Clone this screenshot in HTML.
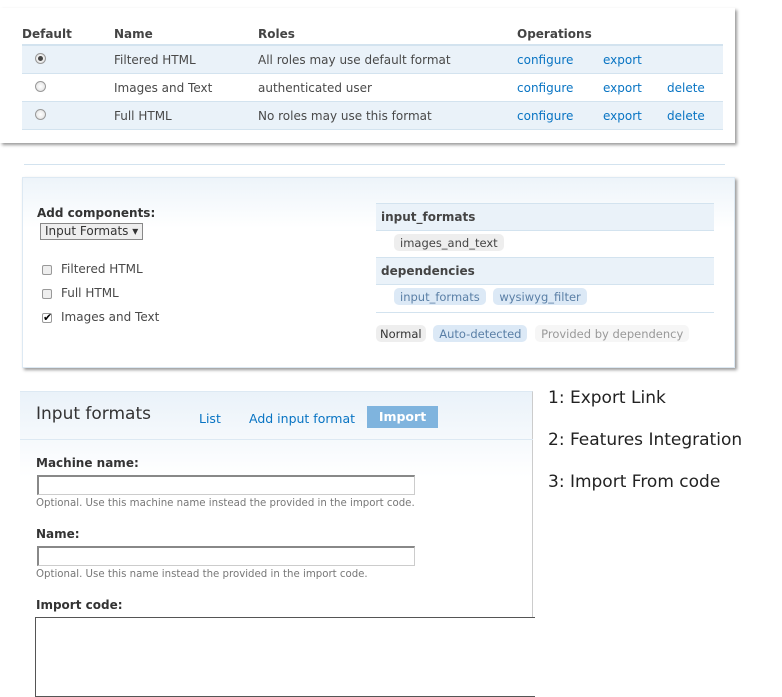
<!DOCTYPE html>
<html><head><style>
*{margin:0;padding:0;box-sizing:border-box}
body{width:782px;height:645px;background:#fff;font-family:"DejaVu Sans",Verdana,sans-serif;font-size:12px;color:#494949;position:relative;overflow:hidden}
.abs{position:absolute}
.p1{left:0;top:8px;width:735px;height:135px;box-shadow:2px 2px 3px #999;background:#fff}
table{position:absolute;left:22px;top:15px;width:701px;border-collapse:collapse}
th{text-align:left;font-weight:bold;height:22px;font-size:12px;padding:0;color:#444}
td{height:28px;padding:0;border-top:1px solid #d3e3ef;padding-top:2px}
tr.o td{background:#eaf2f9}
tr.last td{border-bottom:1px solid #d3e3ef}
thead tr th{border-bottom:2px solid #d3e3ef}
a{color:#0874c3;text-decoration:none}
.radio{display:inline-block;width:11px;height:11px;border-radius:50%;border:1px solid #999;background:radial-gradient(#fff,#ddd);margin-left:13px;vertical-align:middle;position:relative;top:-2px}
.radio.on::after{content:"";position:absolute;left:2px;top:2px;width:5px;height:5px;border-radius:50%;background:#444}
.p2{left:22px;top:177px;width:713px;height:191px;box-shadow:2px 2px 3px #999;border:1px solid #dde9f3;background:linear-gradient(#edf4fa,#fff 50px)}
.tag{display:inline-block;padding:2px 6px 1px;border-radius:5px;font-size:11.5px}
.hdr{position:absolute;left:353px;width:338px;height:28px;background:#eaf2f9;border-top:1px solid #d3e3ef;border-bottom:1px solid #d3e3ef;font-weight:bold;font-size:12px;color:#444;padding:6px 0 0 5px}
.cb{display:inline-block;width:10px;height:10px;border:1px solid #999;border-radius:2px;background:#eee;vertical-align:middle;margin-right:9px}
.p3{left:20px;top:391px;width:513px;height:260px;border-top:1px solid #dde9f3;border-right:1px solid #ccc;background:linear-gradient(#eaf2f9,#fff 85px)}
.lbl{position:absolute;left:16px;font-weight:bold;font-size:12px;color:#333}
.inp{position:absolute;left:17px;width:378px;height:20px;border:1px solid #ccc;border-top:2px solid #888;border-left:2px solid #888;background:#fff}
.desc{position:absolute;left:16px;font-size:10.2px;color:#777}
.note{position:absolute;left:548px;font-size:17px;color:#222}
</style></head><body>
<div class="abs p1">
<table>
<thead><tr><th style="width:92px">Default</th><th style="width:144px">Name</th><th style="width:259px">Roles</th><th style="width:86px">Operations</th><th style="width:64px"></th><th></th></tr></thead>
<tbody>
<tr class="o"><td><span class="radio on"></span></td><td>Filtered HTML</td><td>All roles may use default format</td><td><a>configure</a></td><td><a>export</a></td><td></td></tr>
<tr><td><span class="radio"></span></td><td>Images and Text</td><td>authenticated user</td><td><a>configure</a></td><td><a>export</a></td><td><a>delete</a></td></tr>
<tr class="o last"><td><span class="radio"></span></td><td>Full HTML</td><td>No roles may use this format</td><td><a>configure</a></td><td><a>export</a></td><td><a>delete</a></td></tr>
</tbody></table>
</div>
<div class="abs" style="left:24px;top:164px;width:701px;height:1px;background:#d3e3ef"></div>
<div class="abs p2">
<div class="abs" style="left:14px;top:28px;font-weight:bold;color:#333">Add components:</div>
<div class="abs" style="left:17px;top:45px;border:1px solid #888;background:#eee;padding:0 4px;height:17px;line-height:15px;color:#333">Input Formats ▾</div>
<div class="abs" style="left:19px;top:84px"><span class="cb"></span>Filtered HTML</div>
<div class="abs" style="left:19px;top:108px"><span class="cb"></span>Full HTML</div>
<div class="abs" style="left:19px;top:132px"><span class="cb" style="background:#fff;font-size:11px;line-height:8px;color:#000">✔</span>Images and Text</div>
<div class="hdr" style="top:25px">input_formats</div>
<div class="abs" style="left:371px;top:56px"><span class="tag" style="background:#eee;color:#444">images_and_text</span></div>
<div class="hdr" style="top:79px">dependencies</div>
<div class="abs" style="left:371px;top:110px"><span class="tag" style="background:#dce9f6;color:#5a7fa6">input_formats</span> &nbsp;<span class="tag" style="background:#dce9f6;color:#5a7fa6">wysiwyg_filter</span></div>
<div class="abs" style="left:353px;top:134px;width:338px;height:1px;background:#d3e3ef"></div>
<div class="abs" style="left:353px;top:147px"><span class="tag" style="background:#eee;color:#333;padding:2px 4px 1px">Normal</span> &nbsp;<span class="tag" style="background:#dce9f6;color:#5a7fa6">Auto-detected</span> &nbsp;<span class="tag" style="background:#f6f6f6;color:#999">Provided by dependency</span></div>
</div>
<div class="abs p3">
<div class="abs" style="left:16px;top:12px;font-size:17px;color:#333">Input formats</div>
<div class="abs" style="left:179px;top:19px;font-size:12.5px"><a>List</a></div>
<div class="abs" style="left:229px;top:19px;font-size:12.5px"><a>Add input format</a></div>
<div class="abs" style="left:347px;top:14px;width:71px;height:22px;background:#7fb4de;color:#fff;font-weight:bold;text-align:center;line-height:22px;font-size:12.5px">Import</div>
<div class="abs" style="left:0;top:47px;width:513px;height:1px;background:#dde9f3"></div>
<div class="lbl" style="top:64px">Machine name:</div>
<div class="inp" style="top:83px"></div>
<div class="desc" style="top:106px">Optional. Use this machine name instead the provided in the import code.</div>
<div class="lbl" style="top:135px">Name:</div>
<div class="inp" style="top:154px"></div>
<div class="desc" style="top:177px">Optional. Use this name instead the provided in the import code.</div>
<div class="lbl" style="top:206px">Import code:</div>
<div class="abs" style="left:15px;top:225px;width:500px;height:80px;border:1px solid #555;border-right:none;background:#fff"></div>
</div>
<div class="note" style="top:388px">1: Export Link</div>
<div class="note" style="top:430px">2: Features Integration</div>
<div class="note" style="top:472px">3: Import From code</div>
</body></html>
